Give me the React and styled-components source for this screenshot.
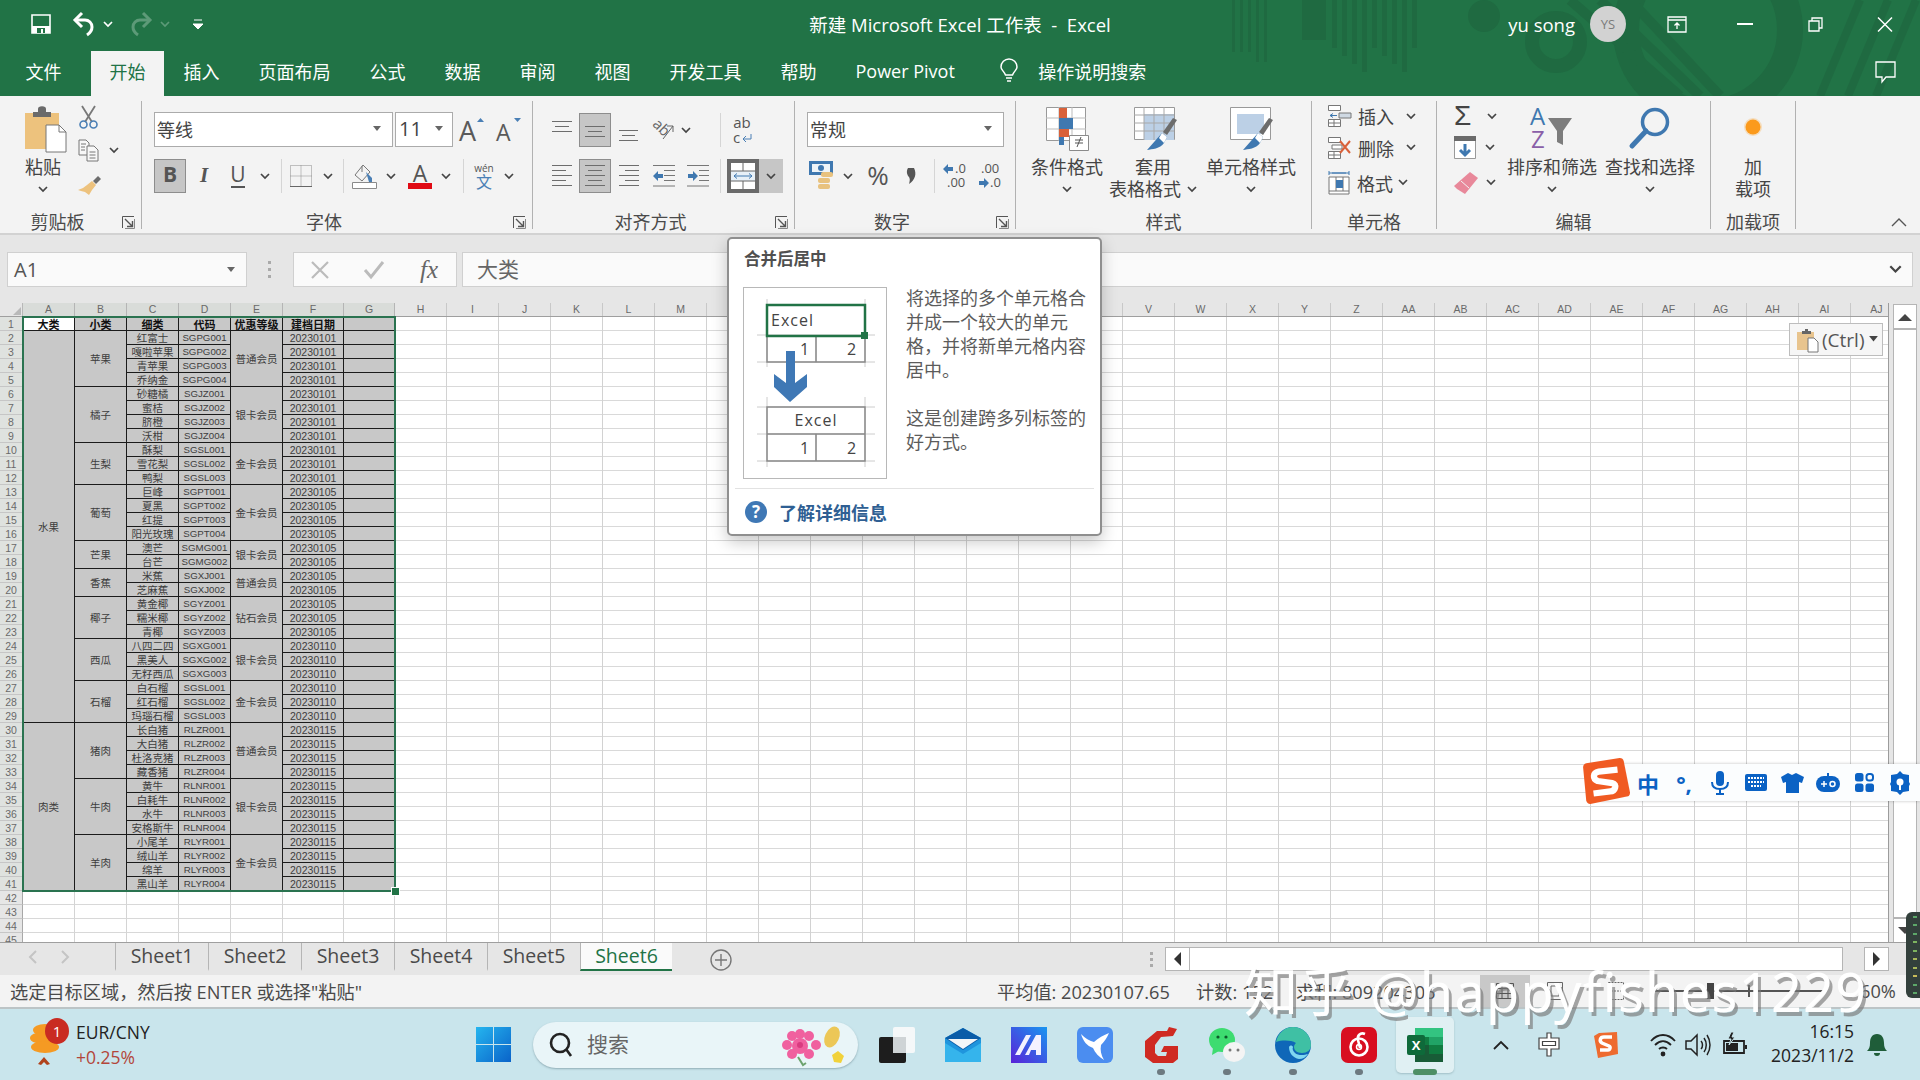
import React from 'react';
import styled, { createGlobalStyle } from 'styled-components';

const GlobalStyle = createGlobalStyle`
  html, body { margin: 0; padding: 0; width: 1920px; height: 1080px; overflow: hidden; }
  body { font-family: 'Open Sans', 'Noto Sans CJK SC', sans-serif; color: #444; }
  * { box-sizing: border-box; }
  svg { display: block; flex: none; overflow: visible; }
`;

const Page = styled.div`
  position: relative;
  width: 1920px;
  height: 1080px;
  display: flex;
  flex-direction: column;
  overflow: hidden;
  background: #e6e6e6;
`;

/* ---------- green header ---------- */
const Header = styled.header`
  position: relative;
  height: 96px;
  background: #217346;
  color: #fff;
  overflow: hidden;
`;
const HeaderArt = styled.svg`
  position: absolute;
  left: 1220px;
  top: 0;
`;
const TitleRow = styled.div`
  position: relative;
  height: 48px;
  display: grid;
  grid-template-columns: 1fr auto 1fr;
  align-items: center;
  font-size: 18.500px;
`;
const Qat = styled.div`
  display: flex;
  align-items: center;
  padding-left: 29px;
`;
const QatSlot = styled.div`
  width: ${p => p.$w}px;
  margin-left: ${p => p.$ml ?? 0}px;
  display: flex;
  justify-content: center;
`;
const WindowBox = styled.div`
  display: flex;
  align-items: center;
  justify-content: flex-end;
`;
const UserName = styled.span`
  margin-right: 15px;
`;
const Avatar = styled.div`
  width: 36px;
  height: 36px;
  margin-right: 14px;
  border-radius: 50%;
  background: #d2d2d2;
  color: #7b7b7b;
  font-size: 13px;
  display: flex;
  align-items: center;
  justify-content: center;
`;
const WinBtn = styled.div`
  width: 70px;
  height: 46px;
  display: flex;
  align-items: center;
  justify-content: center;
  padding-left: ${p => p.$pl ?? 0}px;
`;
const TabRow = styled.nav`
  position: relative;
  height: 48px;
  display: flex;
  align-items: stretch;
  padding-left: 6px;
  font-size: 18px;
`;
const Tab = styled.div`
  display: flex;
  align-items: center;
  padding: 0 ${p => (p.$active ? 18.5 : 19.5)}px ${p => (p.$active ? 5 : 2)}px;
  margin-top: ${p => (p.$active ? 3 : 0)}px;
  margin-left: ${p => (p.$active ? 10 : 0)}px;
  background: ${p => (p.$active ? '#f3f3f3' : 'transparent')};
  color: ${p => (p.$active ? '#217346' : '#fff')};
`;
const HelpTab = styled(Tab)`
  gap: 20px;
  padding-left: 26px;
`;
const CommentBtn = styled.div`
  margin-left: auto;
  margin-right: 24px;
  align-self: center;
`;

/* ---------- ribbon ---------- */
const Ribbon = styled.section`
  height: 139px;
  background: #f3f3f3;
  border-bottom: 2px solid #d2d2d2;
  display: flex;
  align-items: flex-start;
  font-size: 18px;
  position: relative;
`;
const Group = styled.div`
  width: ${p => p.$w}px;
  height: 128px;
  margin-top: 5px;
  border-right: 1px solid #b1b1b1;
  display: flex;
  flex-direction: column;
`;
const GroupBody = styled.div`
  height: 108px;
  flex: none;
  padding-top: ${p => p.$top ?? 0}px;
  padding-left: ${p => p.$left ?? 0}px;
  display: flex;
  flex-direction: ${p => (p.$row ? 'row' : 'column')};
  align-items: flex-start;
`;
const GroupFoot = styled.div`
  height: 26px;
  flex: none;
  display: flex;
  align-items: center;
`;
const GroupLabel = styled.div`
  flex: 1;
  text-align: center;
  line-height: 26px;
  color: #4a4a4a;
`;
const Launcher = styled.div`
  width: 26px;
  display: flex;
  justify-content: center;
`;
const ToolRow = styled.div`
  height: ${p => p.$h ?? 34}px;
  margin-top: ${p => p.$mt ?? 0}px;
  display: flex;
  align-items: center;
`;
const Tool = styled.div`
  width: ${p => p.$w}px;
  height: 100%;
  display: flex;
  align-items: center;
  justify-content: center;
  background: ${p => (p.$on ? '#c6c6c6' : 'transparent')};
  border: ${p => (p.$on ? '1px solid #8d8d8d' : 'none')};
`;
const ToolSep = styled.div`
  width: ${p => p.$w}px;
  height: 100%;
  display: flex;
  justify-content: center;
  &::before {
    content: '';
    width: 1px;
    height: 100%;
    background: #d5d5d5;
  }
`;
const PercentTool = styled(Tool)`
  font-size: 26px;
  padding-bottom: 3px;
  color: #555;
`;
const WrapTool = styled(Tool)`
  margin-left: -19px;
`;
const Combo = styled.div`
  width: ${p => p.$w}px;
  height: 35px;
  margin-right: ${p => p.$mr ?? 0}px;
  background: #fff;
  border: 1px solid #ababab;
  display: flex;
  align-items: center;
  justify-content: space-between;
  padding: 0 ${p => p.$pr ?? 10}px 2px ${p => p.$pl ?? 2}px;
  font-size: ${p => p.$fs ?? 18}px;
  color: #444;
`;
const BigBtn = styled.div`
  width: ${p => p.$w}px;
  margin-top: ${p => p.$mt ?? 0}px;
  margin-right: ${p => p.$mr ?? 0}px;
  display: flex;
  flex-direction: column;
  align-items: center;
  line-height: 22px;
  white-space: nowrap;
`;
const BigIcon = styled.div`
  height: 49px;
  display: flex;
  justify-content: center;
  align-items: flex-start;
  margin-left: ${p => p.$ml ?? 0}px;
`;
const ChevLine = styled.div`
  height: 22px;
  display: flex;
  align-items: center;
  justify-content: center;
  gap: 6px;
`;
const SmallCol = styled.div`
  display: flex;
  flex-direction: column;
  width: ${p => p.$w}px;
  padding-left: ${p => p.$pl ?? 0}px;
`;
const SmallRow = styled.div`
  height: 33px;
  display: flex;
  align-items: center;
  gap: ${p => p.$gap ?? 6}px;
  &:first-child { height: 30px; }
  &:last-child { margin-top: 2px; }
`;
const SideChev = styled.span`
  margin-left: ${p => p.$ml}px;
`;
const SigmaGlyph = styled.span`
  width: 22px;
  font-family: 'Liberation Sans', sans-serif;
  font-size: 28px;
  line-height: 28px;
`;
const CollapseBtn = styled.div`
  position: absolute;
  right: 13px;
  bottom: 6px;
`;

/* ---------- formula bar ---------- */
const FormulaBar = styled.div`
  height: 68px;
  padding: 17px 7px 0;
  display: flex;
  align-items: flex-start;
  background: #e6e6e6;
`;
const FxBox = styled.div`
  height: 35px;
  width: ${p => (p.$w ? `${p.$w}px` : 'auto')};
  flex: ${p => (p.$w ? 'none' : 1)};
  margin-left: ${p => p.$ml ?? 0}px;
  background: #fafafa;
  border: 1px solid #d0d0d0;
  display: flex;
  align-items: center;
  justify-content: space-between;
  padding: 0 10px 0 6px;
  font-size: ${p => p.$fs ?? 20}px;
  color: #555;
`;
const FxDots = styled.div`
  width: 46px;
  height: 35px;
  display: flex;
  align-items: center;
  justify-content: center;
`;
const FxButtons = styled.div`
  display: flex;
  align-items: center;
  justify-content: space-between;
  width: 100%;
  padding: 0 8px 0 11px;
`;
const FxLabel = styled.span`
  font-family: 'Liberation Serif', serif;
  font-style: italic;
  font-size: 25px;
  color: #666;
`;
const FxValue = styled.span`
  margin: 0 0 3px 8px;
  color: #666;
`;

/* ---------- sheet ---------- */
const SheetArea = styled.div`
  height: 639px;
  display: flex;
`;
const SheetMain = styled.div`
  position: relative;
  width: 1889px;
  border-right: 1px solid #9c9c9c;
  display: flex;
  flex-direction: column;
  overflow: hidden;
  background: #fff;
`;
const ColHeader = styled.div`
  height: 14px;
  display: flex;
  background: #e6e6e6;
  border-bottom: 1px solid #9f9f9f;
  flex: none;
  overflow: hidden;
`;
const Corner = styled.div`
  width: 23px;
  flex: none;
  border-right: 1px solid #b8b8b8;
  position: relative;
  &::after {
    content: '';
    position: absolute;
    right: 1px;
    bottom: 1px;
    border-style: solid;
    border-width: 0 0 8px 8px;
    border-color: transparent transparent #b9b9b9 transparent;
  }
`;
const ColName = styled.div`
  width: ${p => p.$w}px;
  flex: none;
  text-align: center;
  font-family: 'Liberation Sans', sans-serif;
  font-size: 10.5px;
  line-height: 13px;
  color: #6a6a6a;
  background: ${p => (p.$sel ? '#d9dcd9' : 'transparent')};
  border-right: 1px solid ${p => (p.$sel ? '#b5b5b5' : '#c8c8c8')};
`;
const Grid = styled.div`
  display: grid;
  grid-template-columns: 23px 52px 52px 52px 52px 52px 61px 51px 1fr;
  grid-auto-rows: 14px;
  flex: none;
`;
const RowName = styled.div`
  font-family: 'Liberation Sans', sans-serif;
  font-size: 10.5px;
  line-height: 14px;
  text-align: center;
  color: #6a6a6a;
  background: ${p => (p.$sel ? '#dfe2df' : '#e6e6e6')};
  border-right: 1px solid #a8a8a8;
  border-bottom: 1px solid #c6c6c6;
`;
const Cell = styled.div`
  grid-row: span ${p => p.$span ?? 1};
  background: ${p => (p.$white ? '#fff' : '#c8c8c8')};
  border-right: 1px solid #1b1b1b;
  border-bottom: 1px solid #1b1b1b;
  display: flex;
  align-items: center;
  justify-content: center;
  white-space: nowrap;
  overflow: hidden;
  font-size: ${p => (p.$head ? 11 : p.$code ? 9.7 : 10.5)}px;
  font-weight: ${p => (p.$head ? 700 : 400)};
  font-family: 'Liberation Sans', 'Noto Sans CJK SC', sans-serif;
  color: ${p => (p.$head ? '#111' : '#3d3d3d')};
`;
const EmptyCell = styled.div`
  border-right: 1px solid #d4d4d4;
  border-bottom: 1px solid #d8d8d8;
`;
const EmptyArea = styled.div`
  grid-column: 9;
  grid-row: span 45;
  background-image:
    repeating-linear-gradient(to right, transparent 0 51px, #d2d2d2 51px 52px),
    repeating-linear-gradient(to bottom, transparent 0 13px, #d9d9d9 13px 14px);
`;
const Selection = styled.div`
  position: absolute;
  left: 22px;
  top: 13px;
  width: 374px;
  height: 576px;
  border: 2px solid #2a7350;
  pointer-events: none;
  &::after {
    content: '';
    position: absolute;
    right: -5px;
    bottom: -5px;
    width: 7px;
    height: 7px;
    background: #217346;
    outline: 1px solid #fff;
  }
`;
const VScroll = styled.div`
  flex: 1;
  padding: 1px 3px 0 4px;
  display: flex;
`;
const VTrack = styled.div`
  flex: 1;
  background: #fff;
  border: 1px solid #b5b5b5;
  border-bottom: none;
  display: flex;
  flex-direction: column;
  justify-content: space-between;
`;
const VBtn = styled.div`
  height: 25px;
  display: flex;
  align-items: center;
  justify-content: center;
  border-${p => (p.$down ? 'top' : 'bottom')}: 2px solid #b5b5b5;
`;
const PasteOptions = styled.div`
  position: absolute;
  left: 1789px;
  top: 323px;
  width: 94px;
  height: 33px;
  background: #f6f6f6;
  border: 1px solid #bdbdbd;
  display: flex;
  align-items: center;
  gap: 3px;
  padding-left: 7px;
  font-size: 19px;
  color: #555;
`;

/* ---------- tabs + status ---------- */
const SheetBar = styled.div`
  height: 33px;
  background: #e6e6e6;
  border-top: 1px solid #9f9f9f;
  display: flex;
  align-items: flex-start;
`;
const SheetNav = styled.div`
  width: 115px;
  height: 28px;
  display: flex;
  align-items: center;
  gap: 24px;
  padding-left: 29px;
`;
const SheetTab = styled.div`
  width: ${p => (p.$active ? 92 : 93)}px;
  height: 28px;
  display: flex;
  align-items: center;
  justify-content: center;
  font-size: 19.500px;
  line-height: 24px;
  color: ${p => (p.$active ? '#217346' : '#4a4a4a')};
  background: ${p => (p.$active ? '#fafafa' : 'transparent')};
  border-left: 1px solid #b5b5b5;
  border-bottom: 2px solid ${p => (p.$active ? '#217346' : 'transparent')};
`;
const AddSheet = styled.div`
  margin: 6px 0 0 38px;
`;
const HScrollDots = styled.div`
  margin: 9px 0 0 407px;
  width: 26px;
  display: flex;
  justify-content: center;
`;
const HScroll = styled.div`
  width: 724px;
  height: 24px;
  margin-top: 4px;
  display: flex;
  background: #e6e6e6;
`;
const HBtn = styled.div`
  width: 25px;
  background: #fff;
  border: 1px solid #b5b5b5;
  display: flex;
  align-items: center;
  justify-content: center;
`;
const HThumb = styled.div`
  width: 653px;
  background: #fff;
  border: 1px solid #b5b5b5;
  border-left: none;
  margin-right: 21px;
`;
const StatusBar = styled.div`
  height: 34px;
  background: #f3f3f3;
  border-bottom: 2px solid #bcc4c6;
  display: flex;
  align-items: center;
  font-size: 18.200px;
  color: #4a4a4a;
`;
const StatusHint = styled.div`
  width: 997px;
  padding-left: 10px;
`;
const StatusValue = styled.div`
  width: ${p => p.$w}px;
  white-space: nowrap;
`;
const ViewBtn = styled.div`
  width: ${p => p.$w}px;
  height: 32px;
  display: flex;
  align-items: center;
  justify-content: center;
  background: ${p => (p.$on ? '#c8c8c8' : 'transparent')};
`;
const ZoomSlider = styled.div`
  position: relative;
  width: 168px;
  height: 2px;
  margin: 0 37px 0 3px;
  background: #555;
  &::before {
    content: '';
    position: absolute;
    left: 52px;
    top: -7px;
    width: 7px;
    height: 16px;
    background: #444;
  }
  &::after {
    content: '';
    position: absolute;
    left: 93px;
    top: -5px;
    width: 2px;
    height: 12px;
    background: #555;
  }
`;

/* ---------- taskbar ---------- */
const Taskbar = styled.footer`
  flex: 1;
  background: #c9e5ec;
  display: flex;
  align-items: center;
  font-family: 'Open Sans', 'Noto Sans CJK SC', sans-serif;
  color: #222;
`;
const Widget = styled.div`
  width: 476px;
  display: flex;
  align-items: center;
  padding-left: 29px;
  gap: 14px;
`;
const WidgetIcon = styled.div`
  position: relative;
  width: 33px;
  height: 50px;
`;
const Badge = styled.div`
  position: absolute;
  left: 16px;
  top: -2px;
  width: 24px;
  height: 26px;
  border-radius: 50%;
  background: #c92b22;
  color: #fff;
  font-size: 15px;
  display: flex;
  align-items: center;
  justify-content: center;
`;
const WidgetText = styled.div`
  font-size: 17.500px;
  line-height: 25px;
`;
const WidgetDelta = styled.div`
  color: #b3463a;
`;
const SearchBox = styled.div`
  width: 325px;
  height: 46px;
  margin: 0 21px 0 22px;
  border-radius: 23px;
  background: #e9f5f8;
  box-shadow: 0 1px 2px rgba(90, 120, 130, 0.5);
  display: flex;
  align-items: center;
  padding: 0 8px 0 16px;
  font-size: 21px;
  color: #666;
  gap: 14px;
`;
const SearchLabel = styled.span`
  margin-bottom: 3px;
`;
const SearchArt = styled.div`
  margin-left: auto;
`;
const TaskApp = styled.div`
  position: relative;
  width: 66px;
  height: 56px;
  margin-left: ${p => p.$ml ?? 0}px;
  display: flex;
  align-items: center;
  justify-content: center;
  &::after {
    content: '';
    display: ${p => (p.$open ? 'block' : 'none')};
    position: absolute;
    left: 50%;
    bottom: -2px;
    width: 8px;
    height: 6px;
    margin-left: -4px;
    border-radius: 3px;
    background: #6d7a80;
  }
`;
const ActiveApp = styled(TaskApp)`
  &::before {
    content: '';
    position: absolute;
    inset: 0 4px;
    border-radius: 5px;
    background: #e0f0f3;
    box-shadow: 0 1px 2px rgba(90, 120, 130, 0.35);
  }
  &::after {
    display: block;
    width: 24px;
    margin-left: -12px;
    background: #4e8f65;
  }
  svg { position: relative; }
`;
const TraySlot = styled.div`
  width: ${p => p.$w}px;
  margin-left: ${p => p.$ml ?? 0}px;
  display: flex;
  align-items: center;
  justify-content: center;
`;
const Clock = styled.div`
  width: 100px;
  margin-top: -3px;
  text-align: right;
  font-size: 17.500px;
  line-height: 24px;
  color: #222;
`;

/* ---------- overlays ---------- */
const Tip = styled.div`
  position: absolute;
  left: 727px;
  top: 237px;
  width: 375px;
  height: 299px;
  background: #fff;
  border: 2px solid #8f8f8f;
  border-radius: 5px;
  box-shadow: 0 6px 16px rgba(0, 0, 0, 0.22);
  padding: 7px 6px 0;
  display: flex;
  flex-direction: column;
`;
const TipTitle = styled.div`
  font-size: 16.500px;
  font-weight: 700;
  line-height: 26px;
  padding-left: 9px;
  color: #505050;
`;
const TipBody = styled.div`
  display: flex;
  gap: 19px;
  padding: 15px 0 0 8px;
`;
const TipShot = styled.div`
  width: 144px;
  height: 192px;
  border: 1px solid #b8b8b8;
`;
const TipText = styled.div`
  width: 190px;
  margin-top: -1px;
  font-size: 18px;
  line-height: 24px;
  color: #5c5c5c;
`;
const TipFoot = styled.div`
  margin-top: 9px;
  height: 50px;
  border-top: 1px solid #e2e2e2;
  display: flex;
  align-items: center;
  gap: 12px;
  padding-left: 10px;
  font-size: 18px;
  font-weight: 700;
  color: #2f5f93;
`;
const Ime = styled.div`
  position: absolute;
  left: 1600px;
  top: 764px;
  width: 320px;
  height: 37px;
  background: #fbfdfe;
  box-shadow: 0 0 3px rgba(0, 0, 0, 0.25);
  display: flex;
  align-items: center;
  padding-left: 30px;
`;
const ImeLogo = styled.div`
  position: absolute;
  left: 1580px;
  top: 758px;
`;
const ImeItem = styled.div`
  width: 36px;
  display: flex;
  justify-content: center;
  color: #0b62c4;
  font-size: ${p => p.$fs ?? 14}px;
  font-weight: 700;
`;
const Meter = styled.div`
  position: absolute;
  left: 1906px;
  top: 912px;
  width: 14px;
  height: 86px;
  border-radius: 6px 0 0 6px;
  background: #33403c;
  padding: 4px 0 4px 7px;
  display: flex;
  flex-direction: column;
  justify-content: space-between;
`;
const MeterDot = styled.div`
  width: 4px;
  height: 2px;
  background: ${p => p.$c};
`;
const Watermark = styled.div`
  position: absolute;
  left: 1244px;
  top: 954px;
  white-space: nowrap;
  font-family: 'Noto Sans', 'Noto Sans CJK SC', sans-serif;
  font-size: 54px;
  line-height: 74px;
  color: #fff;
  letter-spacing: 1.300px;
  text-shadow: 3px 4px 0 rgba(120, 120, 120, 0.65);
  pointer-events: none;
`;
const MergeWrap = styled.div`
  display: flex;
  height: 34px;
  width: 56px;
  margin-left: 2px;
`;
const MergeMain = styled.div`
  width: 32px;
  background: #6a6a6a;
  display: flex;
  align-items: center;
  justify-content: center;
`;
const MergeDrop = styled.div`
  flex: 1;
  background: #c6c6c6;
  display: flex;
  align-items: center;
  justify-content: center;
`;

/* ---------- small drawings ---------- */
const Chev = ({ c = '#444', s = 1 }) => (
  <svg width={10 * s} height={7 * s} viewBox="0 0 10 7"><path d="M1 1l4 4 4-4" fill="none" stroke={c} strokeWidth="1.7" /></svg>
);
const Caret = ({ c = '#666', w = 10 }) => (
  <svg width={w} height={w * 0.6} viewBox="0 0 10 6"><path d="M1 0h8L5 5z" fill={c} /></svg>
);
const LaunchIcon = () => (
  <svg width="13" height="13" viewBox="0 0 13 13"><path d="M.5 12V.5H12" fill="none" stroke="#555" /><path d="M3 3l7 7M5 10.5h5.5V5" fill="none" stroke="#555" strokeWidth="1.4" /><path d="M12.500 3v9.500H3" fill="none" stroke="#888" /></svg>
);
const Save = () => (
  <svg width="20" height="20" viewBox="0 0 20 20"><path d="M1 1h18v18H1z" fill="none" stroke="#fff" strokeWidth="1.6" /><path d="M1 12h18v7H1z" fill="#fff" /><path d="M6 14h8v5H6z" fill="#217346" /><path d="M10 15h2v4h-2z" fill="#fff" /></svg>
);
const Undo = ({ c = '#fff', flip }) => (
  <svg width="22" height="26" viewBox="0 0 22 26" style={flip ? { transform: 'scaleX(-1)' } : undefined}>
    <path d="M3 9h9a7 7 0 0 1 7 7c0 4-2 6-5 8" fill="none" stroke={c} strokeWidth="3" /><path d="M9 2L2 9l7 7" fill="none" stroke={c} strokeWidth="3" />
  </svg>
);
const HeaderDecor = () => (
  <HeaderArt width="700" height="96" viewBox="0 0 700 96">
    <g fill="#1f6a41">
      {[12, 20, 28, 36, 44].map(x => <rect key={x} x={x} width="3" height={x < 30 ? 52 : 62} />)}
      <rect x="82" width="24" height="40" />
      {[112, 122, 132, 142, 152, 162, 172, 182, 192].map((x, i) => <rect key={x} x={x} width="5" height={48 + (i % 4) * 8} />)}
      <circle cx="264" cy="16" r="16" />
    </g>
    <g fill="none" stroke="#1f6a41">
      <circle cx="336" cy="42" r="24" strokeWidth="14" />
      <circle cx="488" cy="30" r="82" strokeWidth="26" />
      <path d="M350 0l110 96M380 0l100 96M410 0l90 96" strokeWidth="10" />
      <path d="M640 0l-40 96M668 0l-40 96M696 0l-40 96" strokeWidth="8" />
    </g>
  </HeaderArt>
);
const PasteIcon = () => (
  <svg width="42" height="45" viewBox="0 0 42 45">
    <path d="M0 6h34v36H0z" fill="#edc27d" /><path d="M8 5h5V2a3 2 0 0 1 8 0v3h5v5H8z" fill="#6a6a6a" />
    <path d="M21 18h13l7 7v20H21z" fill="#fff" stroke="#777" /><path d="M34 18v7h7" fill="none" stroke="#777" />
  </svg>
);
const Scissors = () => (
  <svg width="21" height="23" viewBox="0 0 21 23" fill="none">
    <path d="M4 0l10 16M17 0L7 16" stroke="#777" strokeWidth="1.8" /><circle cx="5.500" cy="18.500" r="3.500" stroke="#4a7fb5" strokeWidth="1.6" /><circle cx="15.500" cy="18.500" r="3.500" stroke="#4a7fb5" strokeWidth="1.6" />
  </svg>
);
const CopyIcon = () => (
  <svg width="21" height="23" viewBox="0 0 21 23" fill="#f7f7f7" stroke="#777">
    <path d="M1 1h7l3 3v12H1z" /><path d="M9 7h7l4 4v11H9z" /><path d="M3 5h5M3 8h4M3 11h4M11.500 13h6M11.500 16h6M11.500 19h6" fill="none" />
  </svg>
);
const BrushIcon = () => (
  <svg width="24" height="20" viewBox="0 0 24 20">
    <path d="M15 6l5-5 3 3-5 5z" fill="#6c6c6c" /><path d="M14 6l4 4-4 5-3 5-4-3-4-1-3-1 5-2 4-3z" fill="#edc27d" />
  </svg>
);
const GrowA = ({ size, up }) => (
  <svg width="30" height="30" viewBox="0 0 30 30">
    <text x="1" y="26" fontSize={size} fontFamily="Open Sans" fill="#5a5a5a">A</text>
    <path d={up ? 'M19 7l3.500-4 3.500 4z' : 'M19 3l3.500 4 3.500-4z'} fill="#4a7fb5" />
  </svg>
);
const Letter = ({ ch, italic, under, serif }) => (
  <svg width="24" height="28" viewBox="0 0 24 28">
    <text x="12" y="20" textAnchor="middle" fontSize="21" fontWeight={under ? 400 : 700} fontStyle={italic ? 'italic' : 'normal'} fontFamily={serif ? 'Liberation Serif' : 'Open Sans'} fill="#555">{ch}</text>
    {under && <rect x="5" y="24" width="14" height="2" fill="#555" />}
  </svg>
);
const BorderIcon = () => (
  <svg width="22" height="22" viewBox="0 0 22 22"><path d="M.5.5h21v21H.5zM11 .5v21M.5 11h21" fill="none" stroke="#8a8a8a" strokeDasharray="1 1" /><path d="M0 21.500h22" stroke="#666" /></svg>
);
const FillIcon = () => (
  <svg width="25" height="25" viewBox="0 0 25 25" fill="none">
    <path d="M11 1l-8 10 7 6 8-9z" stroke="#777" /><path d="M10 2v6" stroke="#777" /><path d="M14 8l6 6v4h-3z" fill="#4a7fb5" /><path d="M.5 18.500h24v6H.5z" fill="#fff" stroke="#8a8a8a" />
  </svg>
);
const FontColor = () => (
  <svg width="24" height="26" viewBox="0 0 24 26">
    <text x="12" y="19" textAnchor="middle" fontSize="23" fontFamily="Open Sans" fill="#555">A</text><rect y="20" width="24" height="6" fill="#e00a14" />
  </svg>
);
const Wen = () => (
  <svg width="22" height="26" viewBox="0 0 22 26">
    <text x="11" y="9" textAnchor="middle" fontSize="10" fontFamily="Open Sans" fill="#555">wén</text>
    <text x="11" y="25" textAnchor="middle" fontSize="16" fontFamily="Noto Sans CJK SC" fill="#4a7fb5">文</text>
  </svg>
);
const Lines = ({ rows, w = 22, h = 22, c = '#6d6d6d' }) => (
  <svg width={w} height={h} viewBox={`0 0 ${w} ${h}`}>
    {rows.map(([y, x1, x2]) => <rect key={`${y}${x1}`} x={x1} y={y} width={x2 - x1} height="1" fill={c} />)}
  </svg>
);
const rowsEven = (ws, step, off = 0) => ws.map(([a, b], i) => [off + i * step, a, b]);
const IndentIcon = ({ out }) => (
  <svg width="23" height="22" viewBox="0 0 23 22">
    {out
      ? <g><path d="M0 11l5-5v3h5v4H5v3z" fill="#3f78b0" /><path d="M0 .5h22M11 5.500h11M11 10.500h11M11 15.500h11M0 21h22" stroke="#777" /></g>
      : <g><path d="M11 11L6 6v3H1v4h5v3z" fill="#3f78b0" /><path d="M0 .5h22M12 5.500h10M12 10.500h10M12 15.500h10M0 21h22" stroke="#777" /></g>}
  </svg>
);
const Orient = () => (
  <svg width="24" height="24" viewBox="0 0 24 24">
    <text x="9" y="14" fontSize="15" fontFamily="Open Sans" fill="#666" transform="rotate(45 9 11)" textAnchor="middle">ab</text>
    <path d="M12 21L22 8M22 8v6M22 8h-6" stroke="#666" fill="none" />
  </svg>
);
const WrapIcon = () => (
  <svg width="22" height="30" viewBox="0 0 22 30">
    <text x="10" y="13" textAnchor="middle" fontSize="15" fontFamily="Open Sans" fill="#555">ab</text>
    <text x="1" y="28" fontSize="15" fontFamily="Open Sans" fill="#555">c</text>
    <path d="M19 19v5h-7M14 21l-3 3 3 3" stroke="#4a7fb5" fill="none" />
  </svg>
);
const MergeIcon = () => (
  <svg width="24" height="26" viewBox="0 0 24 26">
    <path d="M0 0h24v26H0z" fill="#fff" /><path d="M0 8h24v10H0z" fill="#e7f0f7" /><path d="M0 8h24M0 18h24M12 0v8M12 18v8" stroke="#666" />
    <path d="M3 13h18M3 13l3-2.500M3 13l3 2.500M21 13l-3-2.500M21 13l-3 2.500" stroke="#3f78b0" fill="none" />
  </svg>
);
const CurrencyIcon = () => (
  <svg width="25" height="30" viewBox="0 0 25 30">
    <path d="M0 0h24v14H0z" fill="#3f78b0" /><path d="M3 3h18v8H3z" fill="#eef4f8" /><circle cx="12" cy="7" r="3" fill="#3f78b0" />
    <g fill="#e8c27f"><rect x="12" y="11" width="12" height="5" rx="2" /><rect x="9" y="17" width="12" height="5" rx="2" /><rect x="9" y="23" width="12" height="5" rx="2" /></g>
  </svg>
);
const DecimalIcon = ({ inc }) => (
  <svg width="26" height="28" viewBox="0 0 26 28" fontFamily="Open Sans" fontSize="13" fill="#555">
    {inc
      ? <g><path d="M1 7l5-5v3h5v4H6v3z" fill="#3f78b0" /><text x="13" y="11">.0</text><text x="5" y="25">.00</text></g>
      : <g><text x="5" y="11">.00</text><path d="M13 21l-5-5v3H3v4h5v3z" fill="#3f78b0" /><text x="14" y="25">.0</text></g>}
  </svg>
);
const CondIcon = () => (
  <svg width="48" height="44" viewBox="0 0 48 44">
    <path d="M.5.5h39v33H.5z" fill="#fff" stroke="#999" /><path d="M0 11h40M0 22h40M13 0v34M26 0v34" stroke="#bbb" />
    <rect x="13" y="1" width="8" height="10" fill="#d9613a" /><rect x="13" y="11" width="14" height="11" fill="#3f78b0" /><rect x="13" y="22" width="10" height="8" fill="#d9613a" /><rect x="13" y="30" width="5" height="8" fill="#3f78b0" />
    <path d="M23.500 28.500h19v15h-19z" fill="#fff" stroke="#8a8a8a" /><path d="M29 36h8M29 33h8M31 40l4-10" stroke="#555" />
  </svg>
);
const TableIcon = ({ cell }) => (
  <svg width="44" height="44" viewBox="0 0 44 44">
    <path d="M.5.5h40v32H.5z" fill="#fff" stroke="#999" />
    {cell
      ? <path d="M7 7h27v20H7z" fill="#bcd0e6" />
      : <g><path d="M10 7h30v26H10z" fill="#bcd0e6" /><path d="M0 8h40M0 16h40M0 24h40M10 0v33M20 0v33M30 0v33" stroke="#a8a8a8" /></g>}
    <path d="M43 13L33 28l-4-3 10-14z" fill="#6c6c6c" />
    <path d="M28 26l5 4-3 6c-4 6-12 6-17 7z" fill="#3f78b0" /><path d="M28 26l5 4-3 6-5-5z" fill="#fff" />
  </svg>
);
const InsertIcon = () => (
  <svg width="24" height="22" viewBox="0 0 24 22" stroke="#777" fill="#fff">
    <path d="M.5.5h12v5H.5zM.5 14.500h12v7H.5zM6 14v8M.5 18h12" /><path d="M11 8h12v5H11z" fill="#cfd9e3" /><path d="M9 10.500H2M2 10.500l3-2M2 10.500l3 2" stroke="#3f78b0" fill="none" />
  </svg>
);
const DeleteIcon = () => (
  <svg width="24" height="22" viewBox="0 0 24 22" stroke="#777" fill="#fff">
    <path d="M.5.5h12v5H.5zM.5 14.500h12v7H.5zM6 14v8M.5 18h12M4 8h10v4H4z" /><path d="M12 4l10 12M22 4L12 16" stroke="#d9613a" strokeWidth="2" />
  </svg>
);
const FormatIcon = () => (
  <svg width="24" height="24" viewBox="0 0 24 24" stroke="#777" fill="#fff">
    <path d="M1 6h20v14H1zM1 20v3h20v-3M8 6v14M15 6v14" /><path d="M8 9h7v8H8z" fill="#3f78b0" stroke="none" /><path d="M1 2h20M1 0v4M21 0v4M4 2h14" stroke="#3f78b0" fill="none" />
  </svg>
);
const FillDown = () => (
  <svg width="22" height="23" viewBox="0 0 22 23">
    <path d="M.5.500h21v22H.5z" fill="#fff" stroke="#999" /><path d="M0 0h22v5H0z" fill="#6a6a6a" /><path d="M11 8v11M6 14l5 5 5-5" fill="none" stroke="#3f78b0" strokeWidth="3" />
  </svg>
);
const Eraser = () => (
  <svg width="24" height="22" viewBox="0 0 24 22"><path d="M16 0l8 6-13 16-8-5-3-3z" fill="#e8889a" /><path d="M7 9l8 7" stroke="#f3f3f3" /></svg>
);
const SortIcon = () => (
  <svg width="44" height="42" viewBox="0 0 44 42" fontFamily="Open Sans">
    <text x="0" y="18" fontSize="24" fill="#3f78b0">A</text><text x="1" y="41" fontSize="24" fill="#8a5fa8">Z</text>
    <path d="M18 11h24L33 24v14l-6-3V24z" fill="#7c7c7c" />
  </svg>
);
const FindIcon = () => (
  <svg width="42" height="42" viewBox="0 0 42 42" fill="none">
    <circle cx="26" cy="15" r="12.500" stroke="#3f78b0" strokeWidth="3.500" /><path d="M17 24L3 39" stroke="#3f78b0" strokeWidth="5" strokeLinecap="round" />
  </svg>
);
const Excelish = ({ size = 36 }) => (
  <svg width={size} height={size} viewBox="0 0 36 36">
    <path d="M8 1h26a2 2 0 0 1 2 2v30a2 2 0 0 1-2 2H8z" fill="#21a366" /><path d="M8 1h14v9H8z" fill="#33c481" /><path d="M22 1h14v9H22z" fill="#33c481" /><path d="M8 10h28v8H8z" fill="#107c41" /><path d="M22 10h14v8H22z" fill="#21a366" /><path d="M8 18h14v9H8z" fill="#185c37" /><path d="M22 18h14v9H22z" fill="#107c41" /><path d="M8 27h28v8H8z" fill="#185c37" />
    <rect y="8" width="18" height="20" rx="2" fill="#0e6a3a" /><text x="9" y="23" textAnchor="middle" fontSize="13" fontWeight="700" fontFamily="Open Sans" fill="#fff">X</text>
  </svg>
);
const TipPicture = () => (
  <svg width="142" height="190" viewBox="1 1 142 190" fontFamily="Open Sans" fontSize="16" fill="#444">
    <path d="M24 12v68M73 48v28M122 12v68M14 48h118M14 75h118M24 110v70M73 146v28M122 110v70M14 120h118M14 147h118M14 174h118" stroke="#ccc" />
    <path d="M24 49v26h98V49M73 49v26M24 120h98v54H24zM24 147h98M73 147v27" fill="none" stroke="#8a8a8a" strokeWidth="1.500" />
    <text x="28" y="39" letterSpacing="1">Excel</text><text x="57" y="68">1</text><text x="104" y="68">2</text>
    <path d="M24 18h98v31H24z" fill="none" stroke="#217346" strokeWidth="2.500" /><rect x="118" y="45" width="7" height="7" fill="#217346" />
    <path d="M43 64h9v32l12-9v13l-17 15-16-15V87l12 9z" fill="#3f78b5" />
    <text x="73" y="139" textAnchor="middle" letterSpacing="1">Excel</text><text x="57" y="167">1</text><text x="104" y="167">2</text>
  </svg>
);

/* ---------- sheet data ---------- */
const COLS = 'A B C D E F G H I J K L M N O P Q R S T U V W X Y Z AA AB AC AD AE AF AG AH AI AJ'.split(' ');
const colWidth = i => (i === 5 ? 61 : i === 6 ? 51 : 52);

const GROUPS = [
  ['苹果', 'SGPG', '普通会员', '20230101', ['红富士', '嘎啦苹果', '青苹果', '乔纳金']],
  ['橘子', 'SGJZ', '银卡会员', '20230101', ['砂糖橘', '蜜桔', '脐橙', '沃柑']],
  ['生梨', 'SGSL', '金卡会员', '20230101', ['酥梨', '雪花梨', '鸭梨']],
  ['葡萄', 'SGPT', '金卡会员', '20230105', ['巨峰', '夏黑', '红提', '阳光玫瑰']],
  ['芒果', 'SGMG', '银卡会员', '20230105', ['澳芒', '台芒']],
  ['香蕉', 'SGXJ', '普通会员', '20230105', ['米蕉', '芝麻蕉']],
  ['椰子', 'SGYZ', '钻石会员', '20230105', ['黄金椰', '糯米椰', '青椰']],
  ['西瓜', 'SGXG', '银卡会员', '20230110', ['八四二四', '黑美人', '无籽西瓜']],
  ['石榴', 'SGSL', '金卡会员', '20230110', ['白石榴', '红石榴', '玛瑙石榴']],
  ['猪肉', 'RLZR', '普通会员', '20230115', ['长白猪', '大白猪', '杜洛克猪', '藏香猪']],
  ['牛肉', 'RLNR', '银卡会员', '20230115', ['黄牛', '白耗牛', '水牛', '安格斯牛']],
  ['羊肉', 'RLYR', '金卡会员', '20230115', ['小尾羊', '绒山羊', '绵羊', '黑山羊']],
];

function buildRows() {
  const out = [];
  let row = 2;
  GROUPS.forEach((g, gi) => {
    g[4].forEach((name, i) => {
      out.push(<RowName key={`r${row}`} $sel>{row}</RowName>);
      if (row === 2) out.push(<Cell key="water" $span={28}>水果</Cell>);
      if (row === 30) out.push(<Cell key="meat" $span={12}>肉类</Cell>);
      if (i === 0) out.push(<Cell key={`b${gi}`} $span={g[4].length}>{g[0]}</Cell>);
      out.push(<Cell key={`c${row}`}>{name}</Cell>);
      out.push(<Cell key={`d${row}`} $code>{`${g[1]}00${i + 1}`}</Cell>);
      if (i === 0) out.push(<Cell key={`e${gi}`} $span={g[4].length}>{g[2]}</Cell>);
      out.push(<Cell key={`f${row}`}>{g[3]}</Cell>);
      out.push(<Cell key={`g${row}`} />);
      row += 1;
    });
  });
  return out;
}

const HEADS = ['大类', '小类', '细类', '代码', '优惠等级', '建档日期', ''];
const MENU = ['插入', '页面布局', '公式', '数据', '审阅', '视图', '开发工具'];

function MergeSplit() {
  return (
    <MergeWrap>
      <MergeMain><MergeIcon /></MergeMain>
      <MergeDrop><Chev /></MergeDrop>
    </MergeWrap>
  );
}

export default function App() {
  return (
    <Page>
      <GlobalStyle />
      <Header>
        <HeaderDecor />
        <TitleRow>
          <Qat>
            <QatSlot $w={24}><Save /></QatSlot>
            <QatSlot $w={38} $ml={12}><Undo /></QatSlot>
            <Chev c="#fff" />
            <QatSlot $w={38} $ml={9}><Undo c="#5d9a78" flip /></QatSlot>
            <Chev c="#5d9a78" />
            <QatSlot $w={56}>
              <svg width="10" height="11" viewBox="0 0 10 11"><path d="M1 1h8M0 5h10l-5 5z" stroke="#fff" fill="#fff" /></svg>
            </QatSlot>
          </Qat>
          <div>新建 Microsoft Excel 工作表&nbsp; - &nbsp;Excel</div>
          <WindowBox>
            <UserName>yu song</UserName>
            <Avatar>YS</Avatar>
            <WinBtn $pl={4}>
              <svg width="20" height="17" viewBox="0 0 20 17" fill="none" stroke="#fff" strokeWidth="1.300"><path d="M1 1h18v15H1zM1 4h18M10 13V7M7.500 9.500L10 7l2.500 2.500" /></svg>
            </WinBtn>
            <WinBtn><svg width="16" height="2"><rect width="16" height="2" fill="#fff" /></svg></WinBtn>
            <WinBtn>
              <svg width="15" height="15" viewBox="0 0 15 15" fill="none" stroke="#fff" strokeWidth="1.300"><path d="M1 4h10v10H1zM4 4V1h10v10h-3" /></svg>
            </WinBtn>
            <WinBtn>
              <svg width="16" height="15" viewBox="0 0 16 15" stroke="#fff" strokeWidth="1.500"><path d="M1 .5l14 14M15 .5l-14 14" /></svg>
            </WinBtn>
          </WindowBox>
        </TitleRow>
        <TabRow>
          <Tab>文件</Tab>
          <Tab $active>开始</Tab>
          {MENU.map(t => <Tab key={t}>{t}</Tab>)}
          <Tab>帮助</Tab>
          <Tab>Power Pivot</Tab>
          <HelpTab>
            <svg width="18" height="24" viewBox="0 0 18 24" fill="none" stroke="#fff" strokeWidth="1.500"><path d="M5.500 16C4 12 1 11 1 8a8 8 0 0 1 16 0c0 3-3 4-4.500 8z" /><path d="M6 19h6M7 22h4" /></svg>
            操作说明搜索
          </HelpTab>
          <CommentBtn>
            <svg width="21" height="22" viewBox="0 0 21 22" fill="none" stroke="#fff" strokeWidth="1.300"><path d="M1 1h19v15h-9l-4 5v-5H1z" /></svg>
          </CommentBtn>
        </TabRow>
      </Header>

      <Ribbon>
        <Group $w={142}>
          <GroupBody $row $top={6} $left={22}>
            <BigBtn $w={42}>
              <BigIcon $ml={6}><PasteIcon /></BigIcon>
              粘贴
              <ChevLine><Chev /></ChevLine>
            </BigBtn>
            <SmallCol $w={60} $pl={14}>
              <ToolRow $h={20}><Scissors /></ToolRow>
              <ToolRow $h={46}><CopyIcon /><SideChev $ml={10}><Chev /></SideChev></ToolRow>
              <ToolRow $h={24}><BrushIcon /></ToolRow>
            </SmallCol>
          </GroupBody>
          <GroupFoot><GroupLabel>剪贴板</GroupLabel><Launcher><LaunchIcon /></Launcher></GroupFoot>
        </Group>

        <Group $w={391}>
          <GroupBody $top={11} $left={12}>
            <ToolRow $h={35}>
              <Combo $w={239} $mr={2}>等线<Caret /></Combo>
              <Combo $w={58} $pl={3} $pr={8} $fs={20}>11<Caret /></Combo>
              <Tool $w={40}><GrowA size={27} up /></Tool>
              <Tool $w={34}><GrowA size={23} /></Tool>
            </ToolRow>
            <ToolRow $mt={12}>
              <Tool $w={32} $on><Letter ch="B" /></Tool>
              <Tool $w={36}><Letter ch="I" italic serif /></Tool>
              <Tool $w={31}><Letter ch="U" under /></Tool>
              <Tool $w={23}><Chev /></Tool>
              <ToolSep $w={10} />
              <Tool $w={30}><BorderIcon /></Tool>
              <Tool $w={23}><Chev /></Tool>
              <ToolSep $w={8} />
              <Tool $w={34}><FillIcon /></Tool>
              <Tool $w={20}><Chev /></Tool>
              <Tool $w={38}><FontColor /></Tool>
              <Tool $w={14}><Chev /></Tool>
              <ToolSep $w={20} />
              <Tool $w={21}><Wen /></Tool>
              <Tool $w={30}><Chev /></Tool>
            </ToolRow>
          </GroupBody>
          <GroupFoot><GroupLabel>字体</GroupLabel><Launcher><LaunchIcon /></Launcher></GroupFoot>
        </Group>

        <Group $w={262}>
          <GroupBody $top={12} $left={12}>
            <ToolRow>
              <Tool $w={34}><Lines rows={rowsEven([[1, 21], [4, 18], [1, 21]], 5, 2)} /></Tool>
              <Tool $w={32} $on><Lines rows={rowsEven([[1, 21], [4, 18], [1, 21]], 5, 7)} /></Tool>
              <Tool $w={36}><Lines rows={rowsEven([[1, 20], [4, 17], [1, 20]], 5, 11)} /></Tool>
              <Tool $w={32}><Orient /></Tool>
              <Tool $w={14}><Chev /></Tool>
              <ToolSep $w={54} />
              <WrapTool $w={30}><WrapIcon /></WrapTool>
            </ToolRow>
            <ToolRow $mt={12}>
              <Tool $w={34}><Lines rows={rowsEven([[1, 21], [1, 15], [1, 21], [1, 15], [1, 21]], 5)} /></Tool>
              <Tool $w={32} $on><Lines rows={rowsEven([[1, 21], [4, 18], [1, 21], [4, 18], [1, 21]], 5)} /></Tool>
              <Tool $w={36}><Lines rows={rowsEven([[1, 21], [7, 21], [1, 21], [7, 21], [1, 21]], 5)} /></Tool>
              <Tool $w={34}><IndentIcon out /></Tool>
              <Tool $w={34}><IndentIcon /></Tool>
              <ToolSep $w={10} />
              <MergeSplit />
            </ToolRow>
          </GroupBody>
          <GroupFoot><GroupLabel>对齐方式</GroupLabel><Launcher><LaunchIcon /></Launcher></GroupFoot>
        </Group>

        <Group $w={221}>
          <GroupBody $top={11} $left={12}>
            <ToolRow $h={35}><Combo $w={197}>常规<Caret /></Combo></ToolRow>
            <ToolRow $mt={12}>
              <Tool $w={29}><CurrencyIcon /></Tool>
              <Tool $w={24}><Chev /></Tool>
              <PercentTool $w={36}>%</PercentTool>
              <Tool $w={30}>
                <svg width="10" height="16" viewBox="0 0 10 16"><path d="M2 0h6c3 6 1 12-5 16 1-4 1-5 0-7-2-2-3-6-1-9z" fill="#555" /></svg>
              </Tool>
              <ToolSep $w={16} />
              <Tool $w={25}><DecimalIcon inc /></Tool>
              <Tool $w={43}><DecimalIcon /></Tool>
            </ToolRow>
          </GroupBody>
          <GroupFoot><GroupLabel>数字</GroupLabel><Launcher><LaunchIcon /></Launcher></GroupFoot>
        </Group>

        <Group $w={296}>
          <GroupBody $row $top={6} $left={15}>
            <BigBtn $w={72} $mr={5}>
              <BigIcon $ml={6}><CondIcon /></BigIcon>
              条件格式
              <ChevLine><Chev /></ChevLine>
            </BigBtn>
            <BigBtn $w={90} $mr={8}>
              <BigIcon $ml={6}><TableIcon /></BigIcon>
              套用
              <ChevLine>表格格式<Chev /></ChevLine>
            </BigBtn>
            <BigBtn $w={90}>
              <BigIcon $ml={2}><TableIcon cell /></BigIcon>
              单元格样式
              <ChevLine><Chev /></ChevLine>
            </BigBtn>
          </GroupBody>
          <GroupFoot><GroupLabel>样式</GroupLabel></GroupFoot>
        </Group>

        <Group $w={125}>
          <GroupBody $left={16}>
            <SmallRow><InsertIcon />插入<SideChev $ml={6}><Chev /></SideChev></SmallRow>
            <SmallRow><DeleteIcon />删除<SideChev $ml={6}><Chev /></SideChev></SmallRow>
            <SmallRow $gap={5}><FormatIcon />格式<Chev /></SmallRow>
          </GroupBody>
          <GroupFoot><GroupLabel>单元格</GroupLabel></GroupFoot>
        </Group>

        <Group $w={274}>
          <GroupBody $row $left={17}>
            <SmallCol $w={52}>
              <SmallRow $gap={11}><SigmaGlyph>Σ</SigmaGlyph><Chev /></SmallRow>
              <SmallRow $gap={9}><FillDown /><Chev /></SmallRow>
              <SmallRow $gap={8}><Eraser /><Chev /></SmallRow>
            </SmallCol>
            <BigBtn $w={92} $mr={6} $mt={6}>
              <BigIcon><SortIcon /></BigIcon>
              排序和筛选
              <ChevLine><Chev /></ChevLine>
            </BigBtn>
            <BigBtn $w={92} $mt={6}>
              <BigIcon><FindIcon /></BigIcon>
              查找和选择
              <ChevLine><Chev /></ChevLine>
            </BigBtn>
          </GroupBody>
          <GroupFoot><GroupLabel>编辑</GroupLabel></GroupFoot>
        </Group>

        <Group $w={85}>
          <GroupBody $row $top={6}>
            <BigBtn $w={84}>
              <BigIcon>
                <svg width="18" height="30" viewBox="0 0 18 30"><circle cx="9" cy="20" r="7.500" fill="#fb9a1d" /><circle cx="9" cy="20" r="9" fill="#fb9a1d" opacity=".25" /></svg>
              </BigIcon>
              加
              <ChevLine>载项</ChevLine>
            </BigBtn>
          </GroupBody>
          <GroupFoot><GroupLabel>加载项</GroupLabel></GroupFoot>
        </Group>

        <CollapseBtn>
          <svg width="16" height="10" viewBox="0 0 16 10"><path d="M1 9l7-7 7 7" fill="none" stroke="#555" strokeWidth="1.400" /></svg>
        </CollapseBtn>
      </Ribbon>

      <FormulaBar>
        <FxBox $w={240}>A1<Caret /></FxBox>
        <FxDots>
          <svg width="4" height="18" viewBox="0 0 4 18"><g fill="#aaa"><rect width="3" height="3" /><rect y="7" width="3" height="3" /><rect y="14" width="3" height="3" /></g></svg>
        </FxDots>
        <FxBox $w={164}>
          <FxButtons>
            <svg width="18" height="18" viewBox="0 0 18 18" stroke="#bbb" strokeWidth="2.200"><path d="M1 1l16 16M17 1L1 17" /></svg>
            <svg width="20" height="18" viewBox="0 0 20 18" fill="none" stroke="#bbb" strokeWidth="3"><path d="M1 9l6 7L19 1" /></svg>
            <FxLabel>fx</FxLabel>
          </FxButtons>
        </FxBox>
        <FxBox $ml={5} $fs={21}>
          <FxValue>大类</FxValue>
          <Chev s={1.300} />
        </FxBox>
      </FormulaBar>

      <SheetArea>
        <SheetMain>
          <ColHeader>
            <Corner />
            {COLS.map((c, i) => <ColName key={c} $w={colWidth(i)} $sel={i < 7}>{c}</ColName>)}
          </ColHeader>
          <Grid>
            <RowName $sel>1</RowName>
            {HEADS.map((h, i) => <Cell key={`h${i}`} $head $white={i === 0}>{h}</Cell>)}
            <EmptyArea />
            {buildRows()}
            {[42, 43, 44, 45].map(r => (
              <React.Fragment key={r}>
                <RowName>{r}</RowName>
                {HEADS.map((_, i) => <EmptyCell key={i} />)}
              </React.Fragment>
            ))}
          </Grid>
          <Selection />
        </SheetMain>
        <VScroll>
          <VTrack>
            <VBtn><svg width="14" height="8" viewBox="0 0 14 8"><path d="M0 8l7-7 7 7z" fill="#444" /></svg></VBtn>
            <VBtn $down><svg width="14" height="8" viewBox="0 0 14 8"><path d="M0 0l7 7 7-7z" fill="#444" /></svg></VBtn>
          </VTrack>
        </VScroll>
      </SheetArea>

      <SheetBar>
        <SheetNav>
          <svg width="8" height="14" viewBox="0 0 8 14"><path d="M7 1L1 7l6 6" fill="none" stroke="#c4c4c4" strokeWidth="2" /></svg>
          <svg width="8" height="14" viewBox="0 0 8 14"><path d="M1 1l6 6-6 6" fill="none" stroke="#c4c4c4" strokeWidth="2" /></svg>
        </SheetNav>
        {[1, 2, 3, 4, 5].map(n => <SheetTab key={n}>{`Sheet${n}`}</SheetTab>)}
        <SheetTab $active>Sheet6</SheetTab>
        <AddSheet>
          <svg width="22" height="22" viewBox="0 0 22 22" fill="none" stroke="#777" strokeWidth="1.400"><circle cx="11" cy="11" r="10" /><path d="M11 5v12M5 11h12" /></svg>
        </AddSheet>
        <HScrollDots>
          <svg width="4" height="16" viewBox="0 0 4 16"><g fill="#aaa"><rect width="3" height="3" /><rect y="6" width="3" height="3" /><rect y="12" width="3" height="3" /></g></svg>
        </HScrollDots>
        <HScroll>
          <HBtn><svg width="7" height="14" viewBox="0 0 7 14"><path d="M7 0L0 7l7 7z" fill="#333" /></svg></HBtn>
          <HThumb />
          <HBtn><svg width="7" height="14" viewBox="0 0 7 14"><path d="M0 0l7 7-7 7z" fill="#333" /></svg></HBtn>
        </HScroll>
      </SheetBar>

      <StatusBar>
        <StatusHint>选定目标区域，然后按 ENTER 或选择"粘贴"</StatusHint>
        <StatusValue $w={199}>平均值: 20230107.65</StatusValue>
        <StatusValue $w={100}>计数: 152</StatusValue>
        <StatusValue $w={184}>求和: 809204306</StatusValue>
        <ViewBtn $w={50} $on>
          <svg width="18" height="16" viewBox="0 0 18 16" fill="none" stroke="#555"><path d="M.5.500h17v15H.5zM6 0v16M12 0v16M0 5.500h18M0 10.500h18" /></svg>
        </ViewBtn>
        <ViewBtn $w={50}>
          <svg width="16" height="18" viewBox="0 0 16 18" fill="none" stroke="#666"><path d="M.5.500h15v17H.5zM4 4h8v10H4z" /></svg>
        </ViewBtn>
        <ViewBtn $w={72}>
          <svg width="16" height="18" viewBox="0 0 16 18" fill="none" stroke="#666"><path d="M.5.500h15v17H.5zM0 9h16" strokeDasharray="2 1" /></svg>
        </ViewBtn>
        <ZoomSlider />
        <span>60%</span>
      </StatusBar>

      <Taskbar>
        <Widget>
          <WidgetIcon>
            <svg width="30" height="50" viewBox="0 0 30 50">
              <g fill="#f59a23"><ellipse cx="16" cy="10" rx="12" ry="6" /><ellipse cx="14" cy="18" rx="13" ry="6" /><ellipse cx="16" cy="27" rx="14" ry="6" /></g>
              <path d="M9 44l6-7 6 7-3 1-3-3-3 3z" fill="#b0431c" />
            </svg>
            <Badge>1</Badge>
          </WidgetIcon>
          <WidgetText>
            EUR/CNY
            <WidgetDelta>+0.25%</WidgetDelta>
          </WidgetText>
        </Widget>
        <svg width="35" height="35" viewBox="0 0 35 35">
          <defs><linearGradient id="win" x1="0" y1="0" x2="1" y2="1"><stop offset="0" stopColor="#25b5ef" /><stop offset="1" stopColor="#0a63c9" /></linearGradient></defs>
          <path d="M0 0h17v17H0zM18 0h17v17H18zM0 18h17v17H0zM18 18h17v17H18z" fill="url(#win)" />
        </svg>
        <SearchBox>
          <svg width="24" height="26" viewBox="0 0 24 26" fill="none" stroke="#222" strokeWidth="2.600"><circle cx="11" cy="11" r="9" /><path d="M17 17l5 7" /></svg>
          <SearchLabel>搜索</SearchLabel>
          <SearchArt>
            <svg width="70" height="40" viewBox="0 0 70 40">
              <g fill="#f0609f">
                <circle cx="7" cy="20" r="5" /><circle cx="12" cy="11" r="5" /><circle cx="12" cy="29" r="5" /><circle cx="20" cy="21" r="8" />
                <circle cx="29" cy="11" r="5" /><circle cx="36" cy="20" r="5" /><circle cx="29" cy="29" r="5" /><circle cx="20" cy="9" r="5" />
              </g>
              <circle cx="20" cy="20" r="3" fill="#d93b80" />
              <path d="M18 32l5 8 3-2" stroke="#6ea36f" strokeWidth="2" fill="none" />
              <ellipse cx="52" cy="12" rx="7" ry="11" fill="#ecc757" transform="rotate(25 52 12)" /><path d="M52 30l6-4 6 5-3 7-7-1z" fill="#f1d23b" />
            </svg>
          </SearchArt>
        </SearchBox>
        <svg width="36" height="36" viewBox="0 0 36 36">
          <rect x="14" width="22" height="26" rx="2" fill="#f5f8f9" /><rect y="10" width="27" height="26" rx="2" fill="#1d1d1d" /><rect x="14" y="10" width="13" height="16" fill="#cfd4d6" />
        </svg>
        <TaskApp $ml={15}>
          <svg width="36" height="34" viewBox="0 0 36 34">
            <path d="M0 10L18 0l18 10v24H0z" fill="#1f95dd" /><path d="M0 10L18 0l18 10-18 12z" fill="#0a5ca8" /><path d="M3 11h30L18 21z" fill="#f3f6f8" /><path d="M0 15l18 11 18-11v19H0z" fill="#35b4ec" />
          </svg>
        </TaskApp>
        <TaskApp>
          <svg width="36" height="36" viewBox="0 0 36 36">
            <defs><linearGradient id="ma" x1="1" y1="0" x2="0" y2="1"><stop offset="0" stopColor="#1996f0" /><stop offset="1" stopColor="#5a22d8" /></linearGradient></defs>
            <rect width="36" height="36" fill="url(#ma)" /><path d="M4 28L15 8h5L9 28zM14 28L25 8h5v20h-5v-5h-5l-2 5z" fill="#f4f1ff" />
          </svg>
        </TaskApp>
        <TaskApp>
          <svg width="36" height="36" viewBox="0 0 36 36">
            <rect width="36" height="36" rx="6" fill="#4b8df0" /><path d="M4 7c5 5 9 7 13 8 4-4 10-7 15-9-2 5-5 9-8 12-1 5 0 10 3 15-5-3-9-7-11-12C10 19 6 14 4 7z" fill="#fff" />
          </svg>
        </TaskApp>
        <TaskApp $open>
          <svg width="32" height="36" viewBox="0 0 32 36">
            <path d="M24 0l8 2-4 7-12 1-6 8v8l3 3h8l1-4h-6l3-6h14v13l-5 4H8l-8-6V14L12 4h10z" fill="#cf2a22" />
          </svg>
        </TaskApp>
        <TaskApp $open>
          <svg width="36" height="36" viewBox="0 0 36 36">
            <ellipse cx="13" cy="13" rx="13" ry="12" fill="#3ddc70" /><path d="M4 21l-1 7 7-4z" fill="#3ddc70" /><circle cx="9" cy="10" r="1.600" fill="#0c5a2a" /><circle cx="17" cy="10" r="1.600" fill="#0c5a2a" />
            <ellipse cx="25" cy="25" rx="11" ry="10" fill="#f4f4f4" /><circle cx="21" cy="23" r="1.500" fill="#777" /><circle cx="29" cy="23" r="1.500" fill="#777" />
          </svg>
        </TaskApp>
        <TaskApp $open>
          <svg width="36" height="36" viewBox="0 0 36 36" fill="none">
            <circle cx="18" cy="18" r="18" fill="#0f67b8" /><path d="M1 15C3 6 10 0 18 0c10 0 18 8 18 18 0 5-4 8-9 8-5 0-8-3-8-6 0-2 1-3 2-4-5-3-14-3-20-1z" fill="#3fc0a4" /><path d="M14 20c0 6 4 11 10 12 4 0 7-2 9-5-3 1-10 2-13-1-2-2-3-4-2-6-1-2-3-2-4 0z" fill="#7fd7f0" />
          </svg>
        </TaskApp>
        <TaskApp $open>
          <svg width="36" height="36" viewBox="0 0 36 36" fill="none">
            <rect width="36" height="36" rx="7" fill="#d80e20" /><circle cx="18" cy="20" r="8.500" stroke="#fff" strokeWidth="2.600" /><path d="M24 7c-5-2-8 2-7 6l2 8" stroke="#fff" strokeWidth="2.600" /><circle cx="18" cy="20" r="2.500" stroke="#fff" strokeWidth="1.500" />
          </svg>
        </TaskApp>
        <ActiveApp><Excelish /></ActiveApp>
        <TraySlot $w={30} $ml={28}>
          <svg width="16" height="10" viewBox="0 0 16 10"><path d="M1 9l7-7 7 7" fill="none" stroke="#222" strokeWidth="1.800" /></svg>
        </TraySlot>
        <TraySlot $w={66}>
          <svg width="22" height="25" viewBox="0 0 22 25" fill="#fff" stroke="#444" strokeWidth="1.200"><path d="M9 1h4v5h8v11h-8v7H9v-7H1V6h8z" /><path d="M4.500 9.500h13v4h-13z" fill="none" /></svg>
        </TraySlot>
        <TraySlot $w={48}>
          <svg width="24" height="26" viewBox="0 0 24 26">
            <path d="M5 1l18-1 1 22-20 4-4-22z" fill="#ee6b2f" /><path d="M18 5H10C6 5 5 9 8 11l7 3c2 1 1 4-1 4H6" fill="none" stroke="#fff" strokeWidth="3.500" />
          </svg>
        </TraySlot>
        <TraySlot $w={34} $ml={16}>
          <svg width="26" height="24" viewBox="0 0 26 24" fill="none" stroke="#222" strokeWidth="1.800"><path d="M1 8c7-8 17-8 24 0M5 12c5-5 11-5 16 0M9 16c2-2 6-2 8 0" /><circle cx="13" cy="21" r="1.500" fill="#222" /></svg>
        </TraySlot>
        <TraySlot $w={36}>
          <svg width="26" height="26" viewBox="0 0 26 26" fill="none" stroke="#222" strokeWidth="1.500"><path d="M1 9h5l6-6v20l-6-6H1zM16 9c2 2 2 6 0 8M19 6c3 4 3 10 0 14M22 3c4 6 4 14 0 20" /></svg>
        </TraySlot>
        <TraySlot $w={38}>
          <svg width="26" height="26" viewBox="0 0 26 26"><path d="M2 9h20v12H2z" fill="none" stroke="#222" strokeWidth="1.800" /><path d="M24 13v4" stroke="#222" strokeWidth="2" /><path d="M4 11h12v8H4z" fill="#222" /><path d="M9 0L6 7h3l-2 6 6-8h-3l2-5z" fill="#222" stroke="#c9e5ec" /></svg>
        </TraySlot>
        <Clock>16:15<br />2023/11/2</Clock>
        <TraySlot $w={46}>
          <svg width="20" height="24" viewBox="0 0 20 24"><path d="M10 1c5 0 7 4 7 9 0 4 1 6 3 8H0c2-2 3-4 3-8 0-5 2-9 7-9z" fill="#1f5d39" /><path d="M7 20h6c0 2-1 3-3 3s-3-1-3-3z" fill="#1f5d39" /></svg>
        </TraySlot>
      </Taskbar>

      <PasteOptions>
        <svg width="22" height="24" viewBox="0 0 22 24">
          <path d="M0 4h17v18H0z" fill="#e8c48e" /><path d="M5 3h3V1h3v2h3v3H5z" fill="#666" /><path d="M11 10h6l4 4v10H11z" fill="#fff" stroke="#777" />
        </svg>
        (Ctrl)
        <Caret c="#444" w={11} />
      </PasteOptions>

      <Tip>
        <TipTitle>合并后居中</TipTitle>
        <TipBody>
          <TipShot><TipPicture /></TipShot>
          <TipText>
            将选择的多个单元格合并成一个较大的单元格，并将新单元格内容居中。
            <br /><br />
            这是创建跨多列标签的好方式。
          </TipText>
        </TipBody>
        <TipFoot>
          <svg width="22" height="22" viewBox="0 0 22 22"><circle cx="11" cy="11" r="11" fill="#3f78b5" /><text x="11" y="17" textAnchor="middle" fontSize="17" fontWeight="700" fontFamily="Open Sans" fill="#fff">?</text></svg>
          了解详细信息
        </TipFoot>
      </Tip>

      <Ime>
        <ImeItem $fs={22}>中</ImeItem>
        <ImeItem $fs={22}>°,</ImeItem>
        <ImeItem><svg width="18" height="24" viewBox="0 0 18 24" fill="#0b62c4"><rect x="5" width="8" height="15" rx="4" /><path d="M1 11c0 5 3 7 8 7s8-2 8-7" fill="none" stroke="#0b62c4" strokeWidth="2" /><path d="M5 22h8v2H5zM8 18h2v4H8z" /></svg></ImeItem>
        <ImeItem><svg width="22" height="17" viewBox="0 0 22 17"><rect width="22" height="17" rx="2" fill="#0b62c4" /><path d="M3 4h16M3 8h16M6 12h10" stroke="#fff" strokeWidth="2" strokeDasharray="2 1" /></svg></ImeItem>
        <ImeItem><svg width="23" height="20" viewBox="0 0 23 20" fill="#0b62c4"><path d="M7 0l4 2 4-2 8 4-2 6-3-1v11H5V9L2 10 0 4z" /></svg></ImeItem>
        <ImeItem><svg width="24" height="19" viewBox="0 0 24 19"><path d="M12 0v4" stroke="#0b62c4" strokeWidth="2" /><rect y="3" width="24" height="16" rx="8" fill="#0b62c4" /><path d="M5 11h6M8 8v6" stroke="#fff" strokeWidth="1.500" /><circle cx="16.500" cy="11" r="2.500" fill="none" stroke="#fff" strokeWidth="1.500" /></svg></ImeItem>
        <ImeItem><svg width="19" height="19" viewBox="0 0 19 19" fill="#0b62c4"><rect width="8.500" height="8.500" rx="2.500" /><rect x="11.500" y="1" width="6.500" height="6.500" rx="2.500" fill="none" stroke="#0b62c4" strokeWidth="2" /><rect y="10.500" width="8.500" height="8.500" rx="2.500" /><rect x="10.500" y="10.500" width="8.500" height="8.500" rx="2.500" /></svg></ImeItem>
        <ImeItem><svg width="20" height="24" viewBox="0 0 20 24" fill="#0b62c4"><path d="M10 0l3 3 6 1v7l1 2-1 2v5l-6 1-3 3-3-3-6-1v-5l-1-2 1-2V4l6-1z" /><circle cx="10" cy="11" r="3.500" fill="#fff" /><path d="M9 13h2v6H9z" fill="#fff" /></svg></ImeItem>
      </Ime>
      <ImeLogo>
        <svg width="50" height="46" viewBox="0 0 48 44">
          <path d="M3 9a4 4 0 0 1 3-4L38 0a4 4 0 0 1 4 3l6 30a4 4 0 0 1-3 4L10 44a4 4 0 0 1-4-3z" fill="#f05a22" />
          <path d="M36 11L18 13c-6 1-6 7-1 9l14 2c5 1 3 8-2 8l-16 2" fill="none" stroke="#fff" strokeWidth="6" />
        </svg>
      </ImeLogo>

      <Meter>
        {['#5da869', '#5da869', '#5da869', '#7db35f', '#7db35f', '#a9b85a', '#a9b85a', '#c8bb5a', '#5da869', '#5da869'].map((c, i) => <MeterDot key={i} $c={c} />)}
      </Meter>
      <Watermark>知乎 @happyfishes1229</Watermark>
    </Page>
  );
}
